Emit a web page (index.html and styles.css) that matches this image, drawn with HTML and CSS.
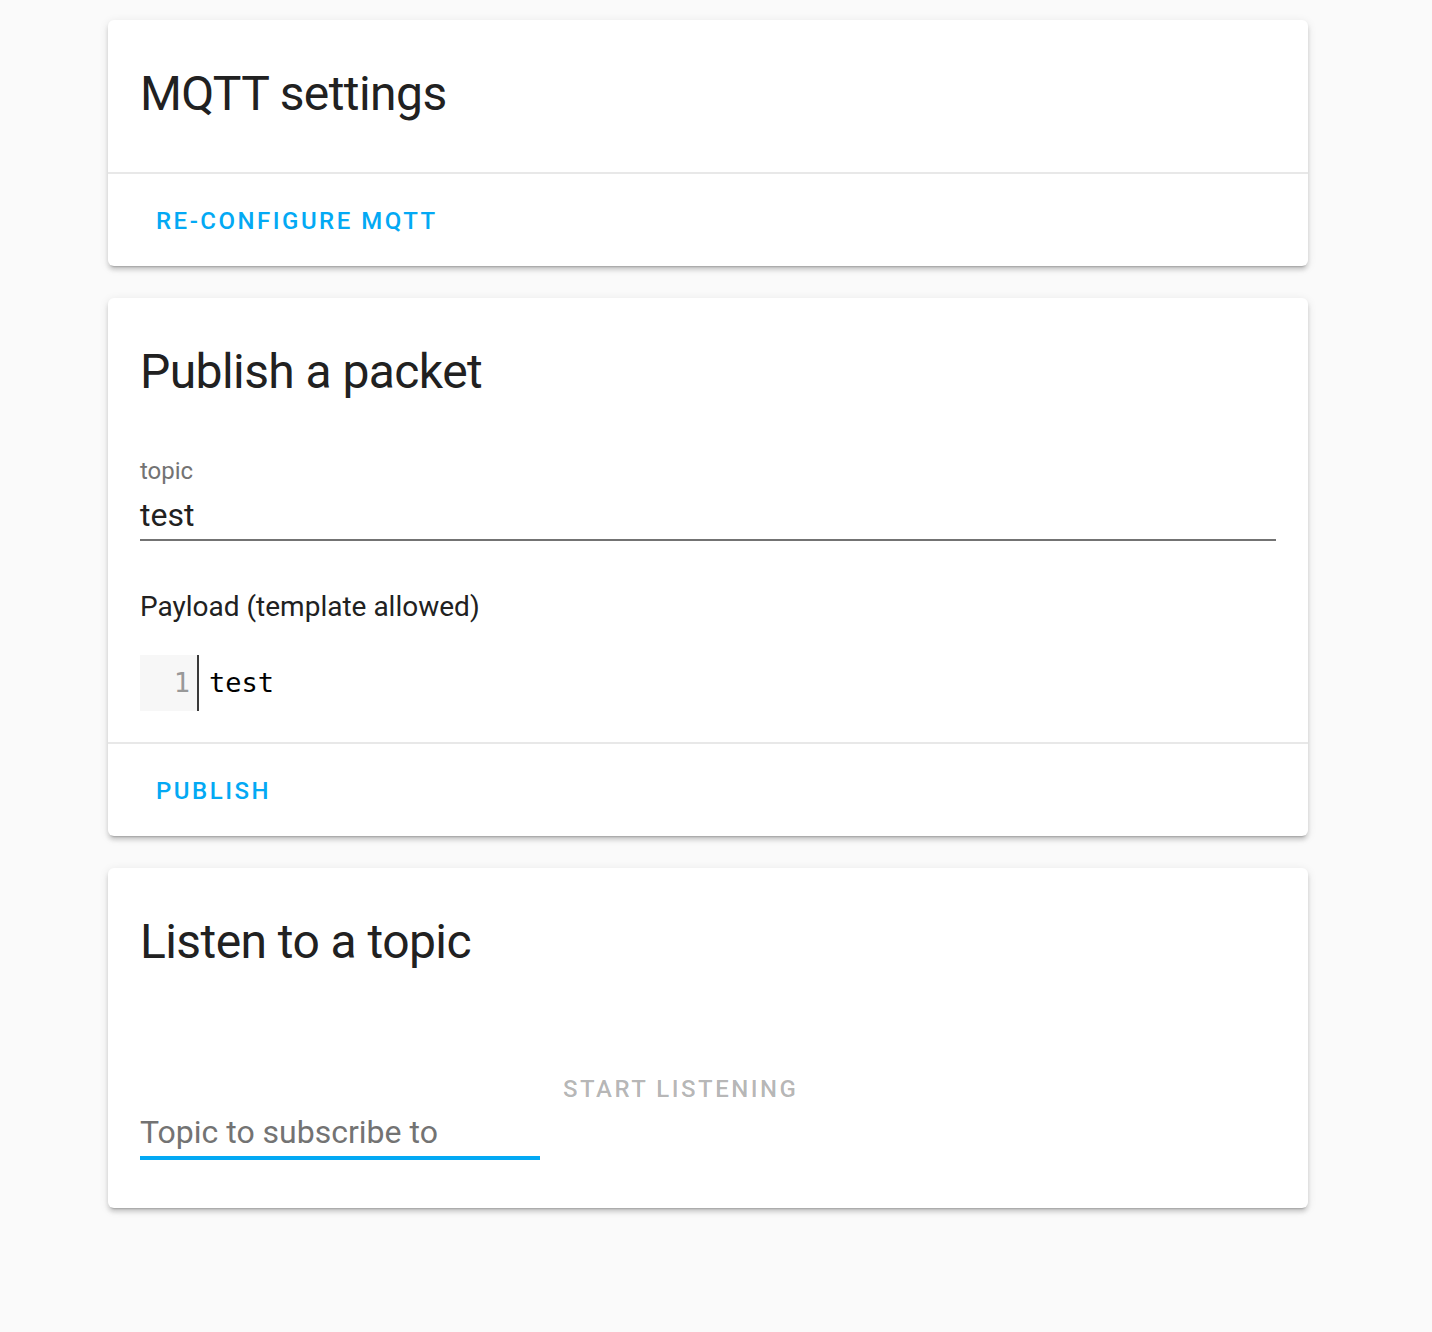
FILE: index.html
```html
<!DOCTYPE html>
<html>
<head>
<meta charset="utf-8">
<title>MQTT</title>
<link rel="stylesheet" href="styles.css">
</head>
<body>
<div class="page">
  <div class="cards">
    <section class="card">
      <h1 class="card-header">MQTT settings</h1>
      <div class="card-actions">
        <span class="btn">Re-configure MQTT</span>
      </div>
    </section>

    <section class="card">
      <h1 class="card-header">Publish a packet</h1>
      <div class="card-content">
        <div class="field">
          <div class="field-label">topic</div>
          <div class="field-value">test</div>
          <div class="field-line"></div>
        </div>
        <div class="payload-label">Payload (template allowed)</div>
        <div class="editor">
          <div class="gutter">1</div>
          <div class="code">test</div>
        </div>
      </div>
      <div class="card-actions">
        <span class="btn">Publish</span>
      </div>
    </section>

    <section class="card">
      <h1 class="card-header">Listen to a topic</h1>
      <div class="listen">
        <div class="sub-field">
          <div class="placeholder">Topic to subscribe to</div>
          <div class="focus-line"></div>
        </div>
        <span class="btn btn-disabled">Start listening</span>
      </div>
    </section>
  </div>
</div>
</body>
</html>
```

FILE: styles.css
```css
* { box-sizing: border-box; }

html, body {
  margin: 0;
  padding: 0;
  background: #fafafa;
}

body {
  font-family: Roboto, "Noto Sans", "Liberation Sans", sans-serif;
  color: #212121;
}

.page {
  width: 1416px;
  padding: 20px 0 40px;
}

.cards {
  width: 1200px;
  margin: 0 auto;
  display: flex;
  flex-direction: column;
  gap: 32px;
}

.card {
  background: #fff;
  border-radius: 6px;
  box-shadow: 0 4px 4px 0 rgba(0,0,0,0.14), 0 2px 10px 0 rgba(0,0,0,0.10), 0 4px 2px -3px rgba(0,0,0,0.2);
}

.card-header {
  margin: 0;
  padding: 26px 32px 30px;
  font-size: 48px;
  font-weight: 400;
  line-height: 96px;
  letter-spacing: -0.012em;
  color: #212121;
}

.card-actions {
  border-top: 2px solid #e8e8e8;
  padding: 11px 32px 9px;
  display: flex;
}

.btn {
  display: inline-flex;
  align-items: center;
  height: 72px;
  padding: 0 16px;
  font-size: 24px;
  font-weight: 500;
  letter-spacing: 2.5px;
  text-transform: uppercase;
  color: #03a9f4;
}

.btn-disabled {
  color: rgba(0,0,0,0.3);
}

.card-content {
  padding: 0 32px 31px;
}

.field {
  padding-top: 9px;
}

.field-label {
  font-size: 24px;
  line-height: 24px;
  color: #737373;
}

.field-value {
  margin-top: 12px;
  font-size: 32px;
  line-height: 40px;
  padding-bottom: 4px;
  color: #212121;
}

.field-line {
  height: 2px;
  background: #737373;
}

.payload-label {
  margin-top: 46px;
  font-size: 28px;
  line-height: 40px;
  color: #212121;
}

.editor {
  margin-top: 28px;
  display: flex;
  height: 56px;
}

.gutter {
  width: 59px;
  background: #f7f7f7;
  border-right: 2px solid #3a3a3a;
  text-align: right;
  padding-right: 7px;
  font-family: "DejaVu Sans Mono", "Liberation Mono", monospace;
  font-size: 27px;
  line-height: 56px;
  color: #999;
}

.code {
  padding-left: 10px;
  font-family: "DejaVu Sans Mono", "Liberation Mono", monospace;
  font-size: 27px;
  line-height: 56px;
  color: #000;
}

.listen {
  display: flex;
  align-items: flex-start;
  padding: 0 32px 48px;
}

.sub-field {
  width: 400px;
  margin-top: 89px;
}

.placeholder {
  font-size: 32px;
  line-height: 47px;
  color: #737373;
}

.focus-line {
  height: 4px;
  background: #03a9f4;
}

.listen .btn {
  margin-top: 33px;
  margin-left: 7px;
}
```
